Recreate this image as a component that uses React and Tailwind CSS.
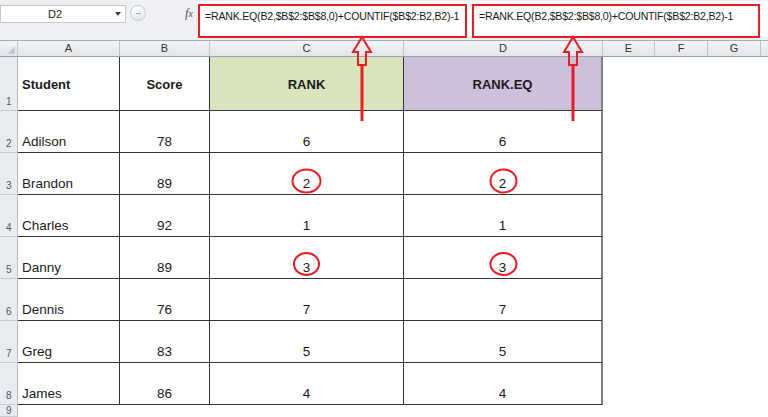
import React from 'react';

const cols = [
    { key: 'A', w: 'w-[102px]' },
    { key: 'B', w: 'w-[90px]' },
    { key: 'C', w: 'w-[194px]' },
    { key: 'D', w: 'w-[199px]' },
    { key: 'E', w: 'w-[52px]' },
    { key: 'F', w: 'w-[53px]' },
    { key: 'G', w: 'w-[53px]' },
];

const rows = [
    ['Adilson', 78, 6, 6],
    ['Brandon', 89, 2, 2],
    ['Charles', 92, 1, 1],
    ['Danny', 89, 3, 3],
    ['Dennis', 76, 7, 7],
    ['Greg', 83, 5, 5],
    ['James', 86, 4, 4],
];

const formula = '=RANK.EQ(B2,$B$2:$B$8,0)+COUNTIF($B$2:B2,B2)-1';

const RowHead = ({ n, h, top }) => (
    <div className={`w-[18px] ${h} shrink-0 bg-[#e8ebef] border-b border-[#c9cdd3] border-r border-r-[#b8bcc2] flex ${top ? 'items-start leading-[11px]' : 'items-end pb-[1px]'} pl-[6px] text-[10px] text-[#555]`}>
        {n}
    </div>
);

const Arrow = ({ x }) => (
    <g fill="none" stroke="#ed1c24">
        <polygon
            strokeWidth="2"
            points={`${x},37 ${x + 9},52 ${x + 4},52 ${x + 4},65 ${x - 4},65 ${x - 4},52 ${x - 9},52`}
        />
        <line x1={x} y1="65" x2={x} y2="121" strokeWidth="3" />
    </g>
);

const App = () => {
    return (
        <div className="relative w-[768px] h-[417px] overflow-hidden bg-white font-['Liberation_Sans',Arial,sans-serif] text-[#1a1a1a]">
            {/* formula bar */}
            <div className="h-[41px] bg-[#eef0f3] border-b border-[#a9aeb5] flex items-start pt-[4px]">
                <div className="w-[126px] h-[18px] mt-[1px] bg-white border border-[#c3c8ce] flex items-center">
                    <span className="flex-1 text-center text-[11px] pr-[6px]">D2</span>
                    <span className="w-0 h-0 border-l-[3px] border-r-[3px] border-t-[4px] border-l-transparent border-r-transparent border-t-[#444] mr-[4px]" />
                </div>
                <div className="ml-[4px] mt-[1px] w-[16px] h-[16px] rounded-full border border-[#c3c8ce] bg-gradient-to-b from-white to-[#e3e6ea] flex items-center justify-center">
                    <span className="w-[5px] h-[1px] bg-[#aab0b7]" />
                </div>
                <div className="w-[51px] flex justify-end items-end pr-[4px] mt-[2px] italic font-['Liberation_Serif',serif] text-[#555] leading-none">
                    <span className="text-[13px]">f</span>
                    <span className="text-[10px]">x</span>
                </div>
                <div className="flex-1 h-[36px] -mt-[3px] bg-white flex items-start gap-[5px] pl-[1px] pt-[3px]">
                    <div className="w-[269px] h-[34px] border-2 border-[#ed1c24] pl-[5px] pt-[3px] text-[10.6px] tracking-[-0.22px] whitespace-nowrap">
                        {formula}
                    </div>
                    <div className="w-[288px] h-[34px] border-2 border-[#ed1c24] pl-[5px] pt-[3px] text-[10.6px] tracking-[-0.22px] whitespace-nowrap">
                        {formula}
                    </div>
                </div>
            </div>

            {/* column headers */}
            <div className="flex h-[16px] bg-gradient-to-b from-[#f4f5f7] to-[#e2e5e9] border-b border-[#9aa0a8]">
                <div className="w-[18px] shrink-0 border-r border-[#c2c6cc] flex items-end justify-end p-[2px]">
                    <span className="w-0 h-0 border-l-[8px] border-l-transparent border-b-[8px] border-b-[#c6cbd1]" />
                </div>
                {cols.map(c => (
                    <div key={c.key} className={`${c.w} shrink-0 border-r border-[#c2c6cc] flex items-center justify-center text-[11px] text-[#333]`}>
                        {c.key}
                    </div>
                ))}
                <div className="flex-1" />
            </div>

            {/* header row */}
            <div className="flex">
                <RowHead n={1} h="h-[54px]" />
                <div className="w-[102px] h-[54px] shrink-0 border-r border-b border-[#333] flex items-center pl-[4px] pt-[2px] text-[13px] font-bold">Student</div>
                <div className="w-[90px] h-[54px] shrink-0 border-r border-b border-[#333] flex items-center justify-center pt-[2px] text-[13px] font-bold">Score</div>
                <div className="w-[194px] h-[54px] shrink-0 bg-[#d8e4bc] border-r border-b border-[#333] flex items-center justify-center pt-[2px] text-[13px] font-bold">RANK</div>
                <div className="w-[199px] h-[54px] shrink-0 bg-[#ccc0da] border-r-2 border-r-[#7f7f7f] border-b border-b-[#333] flex items-center justify-center pt-[2px] text-[13px] font-bold">RANK.EQ</div>
            </div>

            {rows.map((r, i) => (
                <div key={r[0]} className="flex">
                    <RowHead n={i + 2} h="h-[42px]" />
                    <div className="w-[102px] h-[42px] shrink-0 border-r border-b border-[#333] flex items-end pl-[4px] text-[13.5px]">{r[0]}</div>
                    <div className="w-[90px] h-[42px] shrink-0 border-r border-b border-[#333] flex items-end justify-center text-[13.5px]">{r[1]}</div>
                    <div className="w-[194px] h-[42px] shrink-0 border-r border-b border-[#333] flex items-end justify-center text-[13.5px]">{r[2]}</div>
                    <div className="w-[199px] h-[42px] shrink-0 border-r-2 border-r-[#7f7f7f] border-b border-b-[#333] flex items-end justify-center text-[13.5px]">{r[3]}</div>
                </div>
            ))}

            <div className="flex">
                <RowHead n={9} h="h-[12px]" top />
            </div>

            {/* annotations */}
            <svg className="absolute left-0 top-0 pointer-events-none" width="768" height="417">
                <Arrow x={362} />
                <Arrow x={573} />
                <g fill="none" stroke="#ed1c24" strokeWidth="2">
                    <ellipse cx="306.5" cy="181" rx="14" ry="11.5" />
                    <ellipse cx="503.5" cy="181" rx="13" ry="11.5" />
                    <ellipse cx="306.5" cy="264" rx="12.5" ry="11" />
                    <ellipse cx="503.5" cy="264" rx="13" ry="11" />
                </g>
            </svg>
        </div>
    );
};

export default App;
